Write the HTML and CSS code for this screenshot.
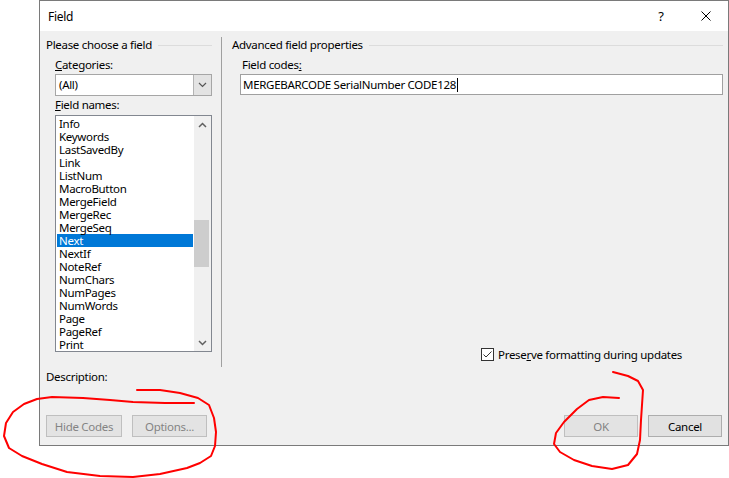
FILE: index.html
```html
<!DOCTYPE html>
<html lang="en">
<head>
  <meta charset="UTF-8" />
  <title>Field</title>
  <link rel="stylesheet" href="styles.css">
</head>
<body>
  <div class="page">
    <div class="dialog" role="dialog" aria-label="Field">
      <div class="titlebar">
        <span class="title">Field</span>
        <span class="help">?</span>
        <span class="close" aria-label="Close">
          <svg width="10" height="10" viewBox="0 0 10 10"><path d="M0.5 0.5 L9.5 9.5 M9.5 0.5 L0.5 9.5" stroke="#000" stroke-width="1" fill="none"/></svg>
        </span>
      </div>

      <div class="content">
        <div class="panes">
          <div class="left-pane">
            <div class="group-head"><span>Please choose a field</span><span class="group-line"></span></div>

            <div class="field-label"><u>C</u>ategories:</div>
            <div class="combo">
              <span class="combo-text">(All)</span>
              <span class="combo-btn">
                <svg width="9" height="6" viewBox="0 0 9 6"><path d="M1 1 L4.5 4.5 L8 1" stroke="#555" stroke-width="1.2" fill="none"/></svg>
              </span>
            </div>

            <div class="field-label names"><u>F</u>ield names:</div>
            <div class="listbox">
              <ul class="items">
                <li class="item">Info</li>
                <li class="item">Keywords</li>
                <li class="item">LastSavedBy</li>
                <li class="item">Link</li>
                <li class="item">ListNum</li>
                <li class="item">MacroButton</li>
                <li class="item">MergeField</li>
                <li class="item">MergeRec</li>
                <li class="item">MergeSeq</li>
                <li class="item selected">Next</li>
                <li class="item">NextIf</li>
                <li class="item">NoteRef</li>
                <li class="item">NumChars</li>
                <li class="item">NumPages</li>
                <li class="item">NumWords</li>
                <li class="item">Page</li>
                <li class="item">PageRef</li>
                <li class="item">Print</li>
              </ul>
              <div class="scrollbar">
                <span class="sb-btn">
                  <svg width="9" height="6" viewBox="0 0 9 6"><path d="M1 5 L4.5 1.5 L8 5" stroke="#606060" stroke-width="1.5" fill="none"/></svg>
                </span>
                <div class="sb-track"><div class="sb-thumb"></div></div>
                <span class="sb-btn">
                  <svg width="9" height="6" viewBox="0 0 9 6"><path d="M1 1 L4.5 4.5 L8 1" stroke="#606060" stroke-width="1.5" fill="none"/></svg>
                </span>
              </div>
            </div>
          </div>

          <div class="divider"></div>

          <div class="right-pane">
            <div class="group-head"><span>Advanced field properties</span><span class="group-line"></span></div>
            <div class="field-label codes">Field codes<u>:</u></div>
            <div class="textbox"><span>MERGEBARCODE SerialNumber CODE128</span><span class="caret"></span></div>

            <label class="check-row">
              <span class="checkbox">
                <svg width="11" height="11" viewBox="0 0 11 11"><path d="M1.5 5.5 L4 8 L9.5 2.5" stroke="#333" stroke-width="1" fill="none"/></svg>
              </span>
              <span>Prese<u>r</u>ve formatting during updates</span>
            </label>
          </div>
        </div>

        <div class="description">Description:</div>

        <div class="buttons">
          <span class="btn disabled hide">Hide Codes</span>
          <span class="btn disabled options">Options...</span>
          <span class="btn disabled ok">OK</span>
          <span class="btn cancel">Cancel</span>
        </div>
      </div>
    </div>

    <!-- red pen marks drawn over the screenshot -->
    <svg class="marks" width="729" height="478" viewBox="0 0 729 478">
      <polyline points="137,390 160,390 180,393 198,398 209,405 214,418 216,432 215,446 211,456 200,463 187,468 160,474 133,477 100,476 67,472 42,464 22,456 9,448 4,436 6,423 13,412 24,404 37,399 52,397 83,398 110,400 133,402 165,403 194,403"/>
      <polyline points="613,372 628,376 638,381 643,390 642,405 641,420 640,440 637,454 628,465 612,469 592,466 574,460 560,452 554,444 556,433 564,422 577,409 589,400 603,397 619,398"/>
    </svg>
  </div>
</body>
</html>
```

FILE: styles.css
```css
* {
  box-sizing: border-box;
}

body {
  margin: 0;
  background: #fff;
  font-family: "Noto Sans", "Open Sans", sans-serif;
  font-size: 11.5px;
  letter-spacing: -0.3px;
  color: #000;
}

.page {
  position: relative;
  width: 729px;
  height: 478px;
}

.dialog {
  margin-left: 39px;
  width: 690px;
  height: 446px;
  border: 1px solid #7a7a7a;
  background: #f0f0f0;
  display: flex;
  flex-direction: column;
}

/* Title bar */
.titlebar {
  flex: none;
  height: 30px;
  background: #fff;
  display: flex;
  align-items: center;
  padding-left: 8px;
}
.title {
  flex: 1;
  font-size: 12px;
}
.help {
  width: 46px;
  text-align: center;
  font-size: 13px;
}
.close {
  width: 44px;
  display: flex;
  justify-content: center;
}

/* Main area */
.content {
  flex: 1;
  display: flex;
  flex-direction: column;
  padding: 6px 5px 0 6px;
}

.panes {
  display: flex;
  height: 330px;
}

.left-pane {
  width: 166px;
  margin-right: 9px;
  display: flex;
  flex-direction: column;
}

.divider {
  width: 1px;
  background: #a0a0a0;
}

.right-pane {
  flex: 1;
  margin-left: 10px;
  display: flex;
  flex-direction: column;
}

.group-head {
  display: flex;
  align-items: center;
  gap: 6px;
  height: 16px;
  line-height: 16px;
  white-space: nowrap;
}
.group-line {
  flex: 1;
  height: 1px;
  background: #dcdcdc;
}

.field-label {
  height: 16px;
  line-height: 16px;
  margin: 4px 0 1px 9px;
}
.field-label.names {
  margin: 1px 0 2px 9px;
}
.field-label.codes {
  margin-left: 10px;
}

/* Combo box */
.combo {
  margin-left: 9px;
  width: 157px;
  height: 22px;
  border: 1px solid #a6a6a6;
  background: #fff;
  display: flex;
}
.combo-text {
  flex: 1;
  padding-left: 3px;
  line-height: 20px;
}
.combo-btn {
  width: 18px;
  background: #e3e3e3;
  border-left: 1px solid #b4b4b4;
  display: flex;
  align-items: center;
  justify-content: center;
}

/* List box */
.listbox {
  margin-left: 9px;
  width: 157px;
  height: 237px;
  border: 1px solid #828790;
  background: #fff;
  display: flex;
}
.items {
  flex: 1;
  list-style: none;
  margin: 0;
  padding: 1px 1px 0 1px;
  overflow: hidden;
}
.item {
  height: 13px;
  line-height: 13px;
  padding-left: 2px;
  white-space: nowrap;
}
.item.selected {
  background: #0078d7;
  color: #fff;
}

.scrollbar {
  width: 17px;
  background: #f0f0f0;
  display: flex;
  flex-direction: column;
}
.sb-btn {
  height: 17px;
  display: flex;
  align-items: center;
  justify-content: center;
}
.sb-track {
  flex: 1;
}
.sb-thumb {
  margin: 87px 2px 0 0;
  height: 47px;
  background: #cdcdcd;
}

/* Field codes text box */
.textbox {
  margin-left: 8px;
  height: 21px;
  border: 1px solid #a0a0a0;
  background: #fff;
  display: flex;
  align-items: center;
  padding-left: 2px;
  white-space: nowrap;
}
.caret {
  width: 1px;
  height: 14px;
  margin-left: 1px;
  background: #000;
}

/* Checkbox */
.check-row {
  margin-top: auto;
  margin-bottom: 5px;
  margin-left: 249px;
  height: 16px;
  display: flex;
  align-items: center;
  gap: 4px;
  white-space: nowrap;
}
.checkbox {
  width: 13px;
  height: 13px;
  border: 1px solid #333;
  background: #fff;
  display: flex;
}

.description {
  margin-top: 2px;
  height: 16px;
  line-height: 16px;
}

/* Buttons */
.buttons {
  margin-top: 30px;
  display: flex;
  gap: 10px;
}
.btn {
  height: 22px;
  border: 1px solid #adadad;
  background: #e1e1e1;
  display: flex;
  align-items: center;
  justify-content: center;
}
.btn.disabled {
  border-color: #bfbfbf;
  background: #e3e3e3;
  color: #838383;
}
.btn.hide { width: 76px; }
.btn.options { width: 75px; }
.btn.ok { width: 74px; margin-left: auto; }
.btn.cancel { width: 74px; margin-right: 1px; }

/* Pen marks */
.marks {
  position: absolute;
  top: 0;
  left: 0;
  pointer-events: none;
}
.marks polyline {
  fill: none;
  stroke: #f00;
  stroke-width: 2;
  stroke-linejoin: round;
  stroke-linecap: round;
}
```
